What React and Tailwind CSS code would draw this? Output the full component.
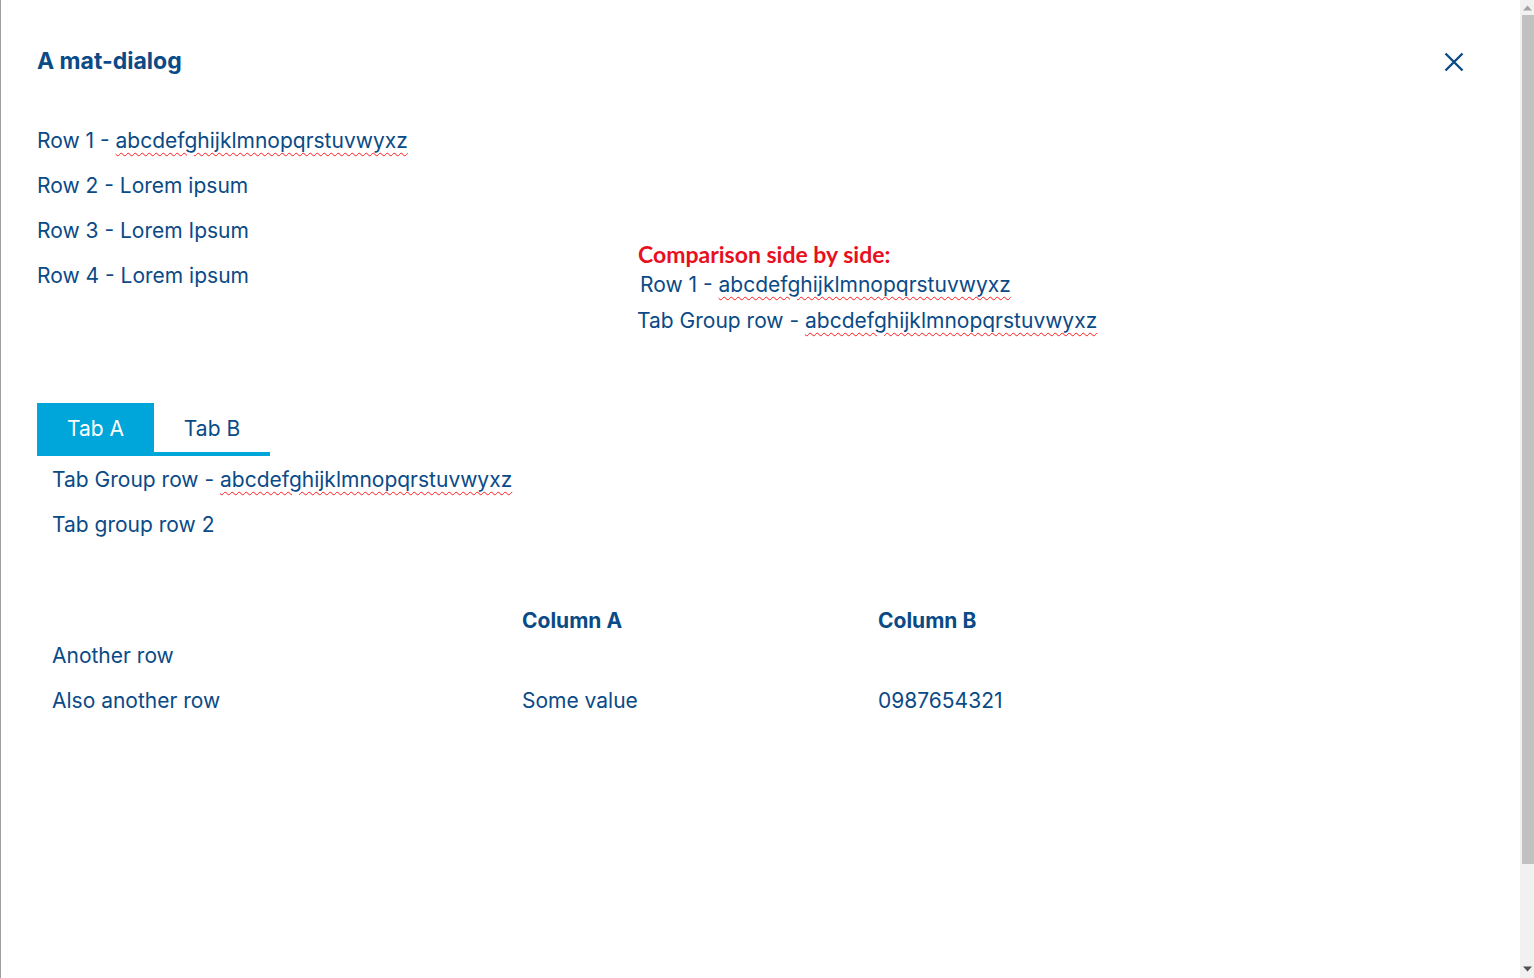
import React from "react";

const spell =
  "underline decoration-wavy decoration-[#ff1a1a] decoration-1 underline-offset-[4px]";

function CloseIcon() {
  return (
    <svg width="24" height="24" viewBox="0 0 24 24" className="mt-[2px]">
      <path
        d="M3.5 3.5 L20.5 20.5 M20.5 3.5 L3.5 20.5"
        stroke="#0a4a86"
        strokeWidth="2.4"
        strokeLinecap="butt"
        fill="none"
      />
    </svg>
  );
}

function Scrollbar() {
  return (
    <div className="w-[14px] h-full bg-[#f1f1f1] flex flex-col items-end shrink-0">
      <div className="h-[15px] w-full flex items-center justify-end pr-[2px]">
        <svg width="9" height="6" viewBox="0 0 9 6">
          <path d="M0 5.5 L4.5 0.5 L9 5.5 Z" fill="#a3a3a3" />
        </svg>
      </div>
      <div className="w-[12px] h-[849px] bg-[#c1c1c1]" />
      <div className="flex-1" />
      <div className="h-[15px] w-full flex items-center justify-end pr-[2px] mb-[2px]">
        <svg width="9" height="6" viewBox="0 0 9 6">
          <path d="M0 0.5 L4.5 5.5 L9 0.5 Z" fill="#505050" />
        </svg>
      </div>
    </div>
  );
}

export default function App() {
  return (
    <div
      className="w-[1534px] h-[978px] flex bg-white border-l border-[#9e9e9e] overflow-hidden text-[#0a4a86]"
      style={{ fontFamily: "Inter, 'Noto Sans', sans-serif" }}
    >
      <div className="flex-1 flex flex-col pl-[36px] pt-[46px]">
        <div className="flex items-center justify-between pr-[54px] h-[30px]">
          <h1 className="text-[23px] leading-[30px] font-bold">A mat-dialog</h1>
          <CloseIcon />
        </div>

        <div className="flex items-start mt-[42px]">
          <div className="w-[600px] text-[21px] leading-[45px]">
            <div>
              Row 1 - <span className={spell}>abcdefghijklmnopqrstuvwyxz</span>
            </div>
            <div>Row 2 - Lorem ipsum</div>
            <div>Row 3 - Lorem Ipsum</div>
            <div>Row 4 - Lorem ipsum</div>
          </div>
          <div className="mt-[121px] text-[21px]">
            <div
              className="h-[30px] leading-[30px] font-bold text-[#e8101e] text-[23px] pl-[1px]"
              style={{ fontFamily: "Lato, 'Open Sans', sans-serif" }}
            >
              Comparison side by side:
            </div>
            <div className="h-[32px] leading-[32px] pl-[3px]">
              Row 1 - <span className={spell}>abcdefghijklmnopqrstuvwyxz</span>
            </div>
            <div className="h-[40px] leading-[40px]">
              Tab Group row - <span className={spell}>abcdefghijklmnopqrstuvwyxz</span>
            </div>
          </div>
        </div>

        <div className="mt-[62px] flex text-[21px]">
          <div className="w-[117px] h-[53px] pt-[2px] bg-[#00a6d9] border-b-4 border-[#00a6d9] text-white flex items-center justify-center">
            Tab A
          </div>
          <div className="w-[116px] h-[53px] pt-[2px] border-b-4 border-[#00a6d9] flex items-center justify-center">
            Tab B
          </div>
        </div>

        <div className="pl-[15px] pt-[1px] text-[21px] leading-[45px]">
          <div>
            Tab Group row - <span className={spell}>abcdefghijklmnopqrstuvwyxz</span>
          </div>
          <div>Tab group row 2</div>
        </div>

        <div className="pl-[15px] mt-[56px] grid grid-cols-[470px_356px_1fr] text-[21px] leading-[35px]">
          <div />
          <div className="font-bold">Column A</div>
          <div className="font-bold">Column B</div>
          <div>Another row</div>
          <div />
          <div />
          <div className="mt-[10px]">Also another row</div>
          <div className="mt-[10px]">Some value</div>
          <div className="mt-[10px]">0987654321</div>
        </div>
      </div>
      <Scrollbar />
    </div>
  );
}
